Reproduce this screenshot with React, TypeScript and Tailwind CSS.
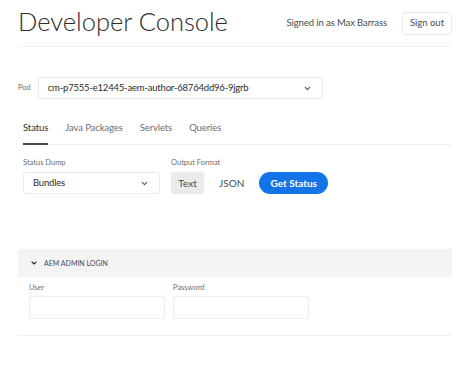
import { ChevronDown } from "lucide-react";

const font = { fontFamily: 'Lato, "Open Sans", "Liberation Sans", sans-serif' };

function Select({ value, className }: { value: string; className: string }) {
  return (
    <div
      className={`flex h-[22px] items-center justify-between rounded-[3px] border border-[#ececec] bg-white pl-[9px] pr-[10px] text-[9.5px] tracking-[-0.2px] text-[#2c2c2c] ${className}`}
    >
      <span>{value}</span>
      <ChevronDown className="h-[9px] w-[9px] text-[#555]" strokeWidth={3} />
    </div>
  );
}

export default function App() {
  return (
    <div className="min-h-[365px] w-[474px] bg-white" style={font}>
      <div className="pl-[18px] pr-[22px]">
        <header className="flex h-[47px] items-center justify-between border-b border-[#f0f0f0]">
          <h1 className="mt-[-2px] text-[25.5px] font-light leading-none text-[#2c2c2c]">
            Developer Console
          </h1>
          <div className="flex items-center gap-[15px]">
            <span className="text-[9.5px] tracking-[-0.1px] text-[#4b4b4b]">Signed in as Max Barrass</span>
            <button className="flex h-[23px] w-[50px] items-center justify-center rounded-[3px] border border-[#ebebeb] text-[9.5px] text-[#4b4b4b]">
              Sign out
            </button>
          </div>
        </header>

        <div className="mt-[30px] flex items-center gap-[7px]">
          <span className="text-[7.5px] text-[#6e6e6e]">Pod</span>
          <Select value="cm-p7555-e12445-aem-author-68764dd96-9jgrb" className="w-[285px]" />
        </div>

        <nav className="ml-[5px] mt-[13px] flex h-[33px] items-center gap-[17px] border-b border-[#f0f0f0] text-[9.5px] tracking-[-0.1px]">
          <span className="relative flex h-full items-center text-[#2c2c2c]">
            Status
            <span className="absolute bottom-[-1px] left-0 h-[2px] w-full bg-[#4b4b4b]" />
          </span>
          <span className="text-[#6e6e6e]">Java Packages</span>
          <span className="text-[#6e6e6e]">Servlets</span>
          <span className="text-[#6e6e6e]">Queries</span>
        </nav>

        <div className="ml-[5px] mt-[13px] flex items-end gap-[11px]">
          <div className="flex flex-col gap-[4px]">
            <span className="text-[7.5px] leading-[10px] text-[#6e6e6e]">Status Dump</span>
            <Select value="Bundles" className="w-[137px]" />
          </div>
          <div className="flex flex-col gap-[4px]">
            <span className="text-[7.5px] leading-[10px] text-[#6e6e6e]">Output Format</span>
            <div className="flex items-center">
              <span className="flex h-[22px] w-[33px] items-center justify-center rounded-[3px] bg-[#eaeaea] text-[10px] text-[#4b4b4b]">
                Text
              </span>
              <span className="ml-[15px] text-[10px] text-[#4b4b4b]">JSON</span>
              <button className="ml-[15px] flex h-[22px] w-[69px] items-center justify-center rounded-full bg-[#1473e6] text-[10px] font-bold text-white">
                Get Status
              </button>
            </div>
          </div>
        </div>

        <section className="mt-[55px] border-b border-[#f0f0f0] pb-[16px]">
          <div className="flex h-[28px] items-center gap-[6px] bg-[#f4f4f4] pl-[12px] text-[7px] uppercase text-[#4b4b4b]">
            <ChevronDown className="h-[8px] w-[8px] text-[#333]" strokeWidth={3.5} />
            <span>AEM Admin Login</span>
          </div>
          <div className="ml-[11px] mt-[6px] flex gap-[8px]">
            <label className="flex flex-col gap-[3px]">
              <span className="text-[7.5px] leading-[10px] text-[#6e6e6e]">User</span>
              <span className="h-[23px] w-[136px] rounded-[2px] border border-[#ececec]" />
            </label>
            <label className="flex flex-col gap-[3px]">
              <span className="text-[7.5px] leading-[10px] text-[#6e6e6e]">Password</span>
              <span className="h-[23px] w-[136px] rounded-[2px] border border-[#ececec]" />
            </label>
          </div>
        </section>
      </div>
    </div>
  );
}
